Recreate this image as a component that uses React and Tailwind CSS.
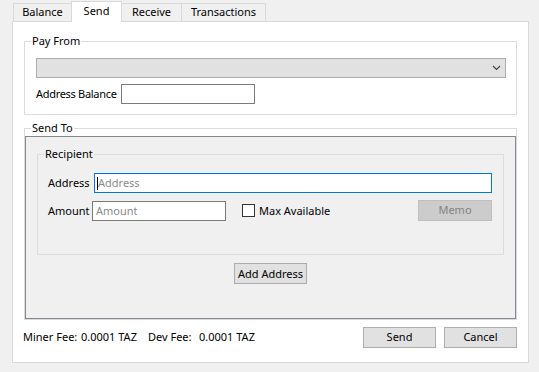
import React from 'react';

const tabs = [
  { label: 'Balance', w: 'w-[59px]' },
  { label: 'Send', w: 'w-[51px]', active: true },
  { label: 'Receive', w: 'w-[61px]' },
  { label: 'Transactions', w: 'w-[85px]' }
];

const Chevron = () => (
  <svg width="9" height="6" viewBox="0 0 9 6" className="block">
    <polyline points="1,1 4.5,4.5 8,1" fill="none" stroke="#404040" strokeWidth="1.1" />
  </svg>
);

// group box: title sits on the top border line
const GroupBox = ({ title, titleBg, className, children }) => (
  <div className={'border border-[#dcdcdc] ' + className}>
    <div className={'-mt-[9px] ml-[6px] px-[1px] w-fit h-[16px] leading-[16px] ' + titleBg}>{title}</div>
    {children}
  </div>
);

const App = () => {
  return (
    <div className="w-[539px] h-[372px] bg-[#f0f0f0] text-[11px] text-black whitespace-nowrap overflow-hidden" style={{ fontFamily: '"Noto Sans", sans-serif' }}>
      {/* tab strip */}
      <div className="flex items-end h-[21px] pl-[13px]">
        {tabs.map((tab, i) => (
          <div
            key={tab.label}
            className={
              (i > 0 ? '-ml-px ' : '') +
              tab.w +
              (tab.active
                ? ' h-[21px] -mb-px relative z-10 bg-white border border-b-0 border-[#d9d9d9] pt-[1px]'
                : ' h-[18px] bg-[#f0f0f0] border border-b-0 border-[#d9d9d9]') +
              ' flex justify-center leading-[16px]'
            }
          >
            {tab.label}
          </div>
        ))}
      </div>

      {/* panel */}
      <div className="ml-[12px] w-[517px] h-[342px] bg-white border border-[#d9d9d9] px-[11px] pt-[19px] flex flex-col">
        <GroupBox title="Pay From" titleBg="bg-white" className="">
          <div className="pl-[11px] pr-[10px] pt-[9px] pb-[10px]">
            <div className="h-[20px] bg-[#e1e1e1] border border-[#adadad] flex items-center justify-end pr-[4px]">
              <Chevron />
            </div>
            <div className="flex items-center mt-[6px]">
              <span className="w-[85px] leading-[16px] tracking-[-0.3px]">Address Balance</span>
              <div className="w-[134px] h-[20px] bg-white border border-[#7a7a7a]"></div>
            </div>
          </div>
        </GroupBox>

        <GroupBox title="Send To" titleBg="bg-white" className="mt-[13px]">
          <div className="h-[183px] bg-[#f0f0f0] border border-[#828790] px-[11px] pt-[17px]">
            <GroupBox title="Recipient" titleBg="bg-[#f0f0f0]" className="">
              <div className="pl-[10px] pr-[11px] pt-[11px] pb-[33px]">
                <div className="flex items-center h-[20px]">
                  <span className="w-[46px] leading-[16px]">Address</span>
                  <div className="flex-1 h-[20px] bg-white border border-[#0078d7] flex items-center pl-[2px]">
                    <span className="w-px h-[13px] bg-black"></span>
                    <span className="text-[#8a8a8a] leading-[16px]">Address</span>
                  </div>
                </div>
                <div className="flex items-center mt-[7px] h-[21px]">
                  <span className="w-[44px] leading-[16px]">Amount</span>
                  <div className="w-[134px] h-[20px] bg-white border border-[#7a7a7a] flex items-center pl-[3px]">
                    <span className="text-[#8a8a8a] leading-[16px]">Amount</span>
                  </div>
                  <div className="ml-[16px] w-[13px] h-[13px] bg-white border border-[#333333]"></div>
                  <span className="ml-[4px] leading-[16px]">Max Available</span>
                  <div className="ml-auto w-[74px] h-[21px] bg-[#cccccc] border border-[#bfbfbf] flex items-center justify-center text-[#838383]">
                    Memo
                  </div>
                </div>
              </div>
            </GroupBox>
            <div className="mt-[8px] flex justify-center">
              <button className="w-[73px] h-[21px] bg-[#e1e1e1] border border-[#adadad] leading-[16px]">Add Address</button>
            </div>
          </div>
        </GroupBox>

        <div className="mt-[7px] flex items-center -ml-px">
          <span className="w-[58px]">Miner Fee:</span>
          <span className="w-[67px]">0.0001 TAZ</span>
          <span className="w-[51px]">Dev Fee:</span>
          <span>0.0001 TAZ</span>
          <div className="ml-auto flex gap-[8px]">
            <button className="w-[73px] h-[21px] bg-[#e1e1e1] border border-[#adadad]">Send</button>
            <button className="w-[73px] h-[21px] bg-[#e1e1e1] border border-[#adadad]">Cancel</button>
          </div>
        </div>
      </div>
    </div>
  );
};

export default App;
